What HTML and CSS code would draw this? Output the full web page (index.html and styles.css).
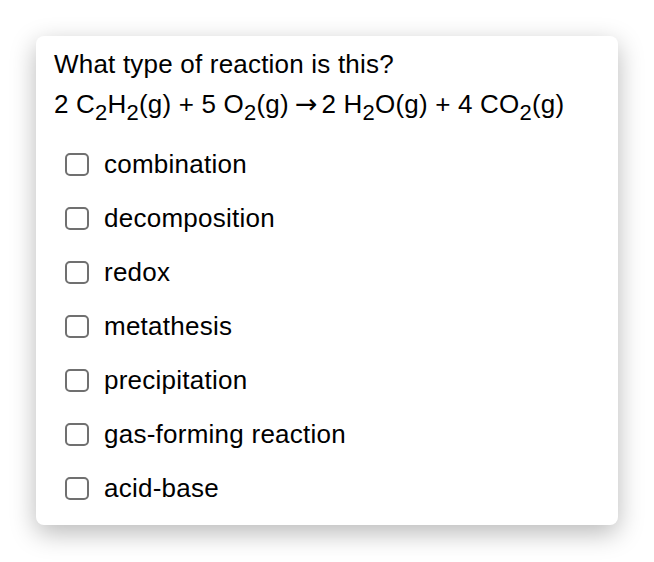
FILE: index.html
```html
<!DOCTYPE html>
<html>
<head>
<meta charset="utf-8">
<link rel="stylesheet" href="styles.css">
</head>
<body>
<div class="card">
  <div class="question">
    <div class="line">What type of reaction is this?</div>
    <div class="line">2 C<sub>2</sub>H<sub>2</sub>(g) + 5 O<sub>2</sub>(g)<span class="arrow">→</span>2 H<sub>2</sub>O(g) + 4 CO<sub>2</sub>(g)</div>
  </div>
  <ul class="options">
    <li class="option"><span class="box"></span><span class="label">combination</span></li>
    <li class="option"><span class="box"></span><span class="label">decomposition</span></li>
    <li class="option"><span class="box"></span><span class="label">redox</span></li>
    <li class="option"><span class="box"></span><span class="label">metathesis</span></li>
    <li class="option"><span class="box"></span><span class="label">precipitation</span></li>
    <li class="option"><span class="box"></span><span class="label">gas-forming reaction</span></li>
    <li class="option"><span class="box"></span><span class="label">acid-base</span></li>
  </ul>
</div>
</body>
</html>
```
FILE: styles.css
```css
html, body {
  margin: 0;
  padding: 0;
  background: #ffffff;
}
body {
  padding: 36px;
  font-family: "Liberation Sans", Arial, Helvetica, sans-serif;
  color: #000;
}
.card {
  width: 582px;
  box-sizing: border-box;
  background: #fff;
  border-radius: 8px;
  box-shadow: 0 8px 26px rgba(0, 0, 0, 0.28);
  padding: 8px 18px 10px 18px;
}
.question {
  font-size: 26px;
  letter-spacing: 0.2px;
}
.line {
  line-height: 40px;
  height: 40px;
  white-space: nowrap;
}
.line sub {
  font-size: 22px;
  line-height: 0;
  vertical-align: -7px;
}
.arrow {
  font-family: "DejaVu Sans", sans-serif;
  font-size: 27px;
  letter-spacing: 0;
  margin: 0 4px 0 6px;
}
.options {
  list-style: none;
  margin: 13px 0 0 0;
  padding: 0 0 0 11px;
}
.option {
  display: flex;
  align-items: center;
  gap: 15px;
  height: 54px;
  font-size: 26px;
  letter-spacing: 0.25px;
}
.box {
  width: 24px;
  height: 23px;
  box-sizing: border-box;
  border: 2px solid #707070;
  border-radius: 5px;
  background: #fff;
  flex: none;
}
.label {
  line-height: 54px;
}
```
